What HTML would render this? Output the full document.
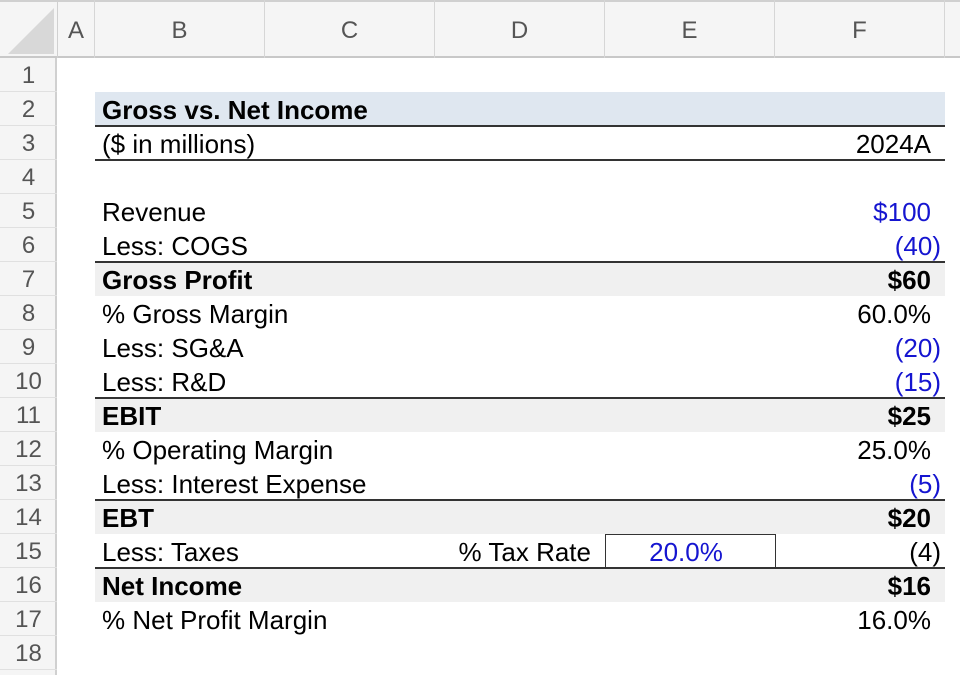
<!DOCTYPE html>
<html><head><style>
*{margin:0;padding:0;box-sizing:border-box}
body{width:960px;height:675px;overflow:hidden;background:#fff;font-family:"Liberation Sans",Arial,sans-serif;position:relative;color:#000}
.a{position:absolute}
.hd{background:#f5f5f5}
.ch{position:absolute;top:0;height:58px;line-height:62px;text-align:center;font-size:24px;color:#555;border-right:1px solid #d6d6d6}
.rn{position:absolute;left:0;width:57px;height:34px;line-height:36px;text-align:center;font-size:24px;color:#555;border-bottom:1px solid #e0e0e0}
.t{position:absolute;height:34px;line-height:37px;font-size:26px;white-space:nowrap}
.r{text-align:right}
.b{font-weight:bold}
.bl{color:#1515d0}
.g{position:absolute;left:95px;width:850px;height:34px;background:#f0f0f0}
.ln{position:absolute;left:95px;width:850px;height:2px;background:#333}
</style></head><body>
<div class="a hd" style="left:0;top:0;width:960px;height:58px;border-top:2px solid #d0d0d0;border-bottom:2px solid #c8c8c8"></div>
<div class="a hd" style="left:0;top:58px;width:57px;height:617px;border-right:2px solid #d0d0d0"></div>
<svg class="a" style="left:4px;top:6px" width="52" height="50"><polygon points="50,2 50,48 4,48" fill="#d8d8d8"/></svg>
<div class="a" style="left:57px;top:0;width:1px;height:58px;background:#d0d0d0"></div>
<div class="ch" style="left:58px;width:37px">A</div>
<div class="ch" style="left:95px;width:170px">B</div>
<div class="ch" style="left:265px;width:170px">C</div>
<div class="ch" style="left:435px;width:170px">D</div>
<div class="ch" style="left:605px;width:170px">E</div>
<div class="ch" style="left:775px;width:170px">F</div>

<div class="rn" style="top:58px">1</div><div class="rn" style="top:92px">2</div><div class="rn" style="top:126px">3</div><div class="rn" style="top:160px">4</div><div class="rn" style="top:194px">5</div><div class="rn" style="top:228px">6</div><div class="rn" style="top:262px">7</div><div class="rn" style="top:296px">8</div><div class="rn" style="top:330px">9</div><div class="rn" style="top:364px">10</div><div class="rn" style="top:398px">11</div><div class="rn" style="top:432px">12</div><div class="rn" style="top:466px">13</div><div class="rn" style="top:500px">14</div><div class="rn" style="top:534px">15</div><div class="rn" style="top:568px">16</div><div class="rn" style="top:602px">17</div><div class="rn" style="top:636px">18</div>

<div class="a" style="left:95px;top:92px;width:850px;height:34px;background:#dfe7f0"></div>
<div class="g" style="top:262px"></div>
<div class="g" style="top:398px"></div>
<div class="g" style="top:500px"></div>
<div class="g" style="top:568px"></div>
<div class="ln" style="top:125px"></div>
<div class="ln" style="top:159px"></div>
<div class="ln" style="top:261px"></div>
<div class="ln" style="top:397px"></div>
<div class="ln" style="top:499px"></div>
<div class="ln" style="top:567px"></div>
<div class="a" style="left:605px;top:534px;width:171px;height:34px;border:1.5px solid #333;border-bottom:none"></div>

<div class="t b" style="left:102px;top:92px">Gross vs. Net Income</div>
<div class="t" style="left:102px;top:126px">($ in millions)</div>
<div class="t r" style="right:29px;top:126px">2024A</div>
<div class="t" style="left:102px;top:194px">Revenue</div>
<div class="t r bl" style="right:29px;top:194px">$100</div>
<div class="t" style="left:102px;top:228px">Less: COGS</div>
<div class="t r bl" style="right:19px;top:228px">(40)</div>
<div class="t b" style="left:102px;top:262px">Gross Profit</div>
<div class="t r b" style="right:29px;top:262px">$60</div>
<div class="t" style="left:102px;top:296px">% Gross Margin</div>
<div class="t r" style="right:29px;top:296px">60.0%</div>
<div class="t" style="left:102px;top:330px">Less: SG&amp;A</div>
<div class="t r bl" style="right:19px;top:330px">(20)</div>
<div class="t" style="left:102px;top:364px">Less: R&amp;D</div>
<div class="t r bl" style="right:19px;top:364px">(15)</div>
<div class="t b" style="left:102px;top:398px">EBIT</div>
<div class="t r b" style="right:29px;top:398px">$25</div>
<div class="t" style="left:102px;top:432px">% Operating Margin</div>
<div class="t r" style="right:29px;top:432px">25.0%</div>
<div class="t" style="left:102px;top:466px">Less: Interest Expense</div>
<div class="t r bl" style="right:19px;top:466px">(5)</div>
<div class="t b" style="left:102px;top:500px">EBT</div>
<div class="t r b" style="right:29px;top:500px">$20</div>
<div class="t" style="left:102px;top:534px">Less: Taxes</div>
<div class="t r" style="right:369px;top:534px">% Tax Rate</div>
<div class="t bl" style="left:605px;width:162px;text-align:center;top:534px">20.0%</div>
<div class="t r" style="right:19px;top:534px">(4)</div>
<div class="t b" style="left:102px;top:568px">Net Income</div>
<div class="t r b" style="right:29px;top:568px">$16</div>
<div class="t" style="left:102px;top:602px">% Net Profit Margin</div>
<div class="t r" style="right:29px;top:602px">16.0%</div>
</body></html>
